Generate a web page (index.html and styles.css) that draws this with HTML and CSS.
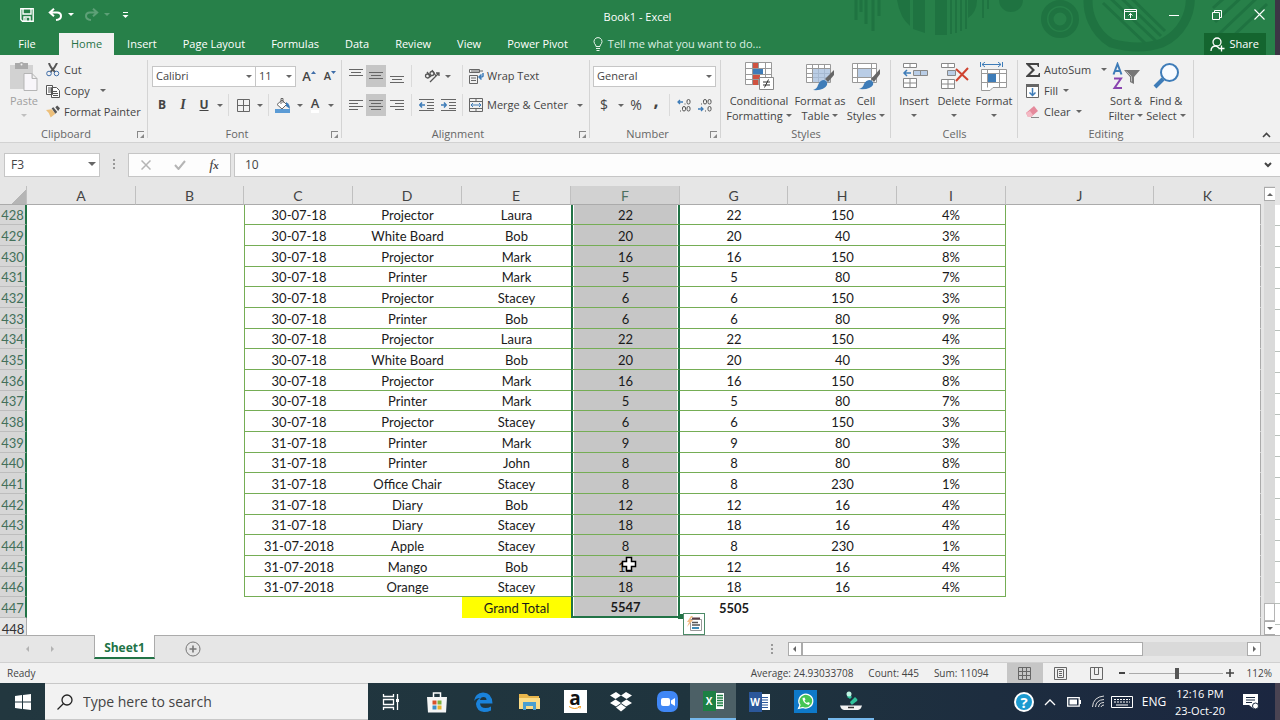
FILE: index.html
```html
<!DOCTYPE html>
<html lang="en">
<head>
<meta charset="utf-8">
<title>Book1 - Excel</title>
<link rel="stylesheet" href="styles.css">
</head>
<body>
<header class="titlebar">
  <svg class="pattern" width="422" height="55" viewBox="0 0 422 55" fill="none" stroke="#1f7341" aria-hidden="true">
    <path d="M3 0v20M8 0v12M13 0v24M20 0v31M26 0v16" stroke-width="3"/>
    <path d="M44 0q3 18 13 26V0M60 0v29l12 4V0" fill="#1f7341" stroke="none"/>
    <path d="M82 0v35h12V0zM124 0q0 12-9 18V0" fill="#1f7341" stroke="none"/>
    <path d="M98 0v34M103 0v33M108 0v31M113 0v29M130 0v18M135 0v9" stroke-width="2"/>
    <circle cx="158" cy="0" r="12" fill="#1f7341" stroke="none"/>
    <circle cx="207" cy="19" r="16" stroke-width="6"/><circle cx="207" cy="19" r="9" stroke-width="5"/>
    <path d="M236-8a49 49 0 0 0 22 51q28 8 51 0a49 49 0 0 0 28-50" stroke-width="9"/>
    <path d="M250 3l42 40M256-3l48 45M264-6l44 42M274-6l38 37" stroke-width="3"/>
    <path d="M360 8l18-16M362 22l30-28M366 34l40-38M378 38l36-34" stroke-width="3"/>
  </svg>
  <div class="titlerow">
    <div class="quick">
      <button aria-label="Save"><svg width="14" height="14" viewBox="0 0 14 14" fill="none" stroke="#fff" stroke-width="1.4"><path d="M.8.8h12.4v12.4H2.5L.8 11.5zM3 1v5h8V1M4 13V9h6v4M6 10v3"/></svg></button>
      <button aria-label="Undo" class="undo"><svg width="15" height="13" viewBox="0 0 15 13" fill="none" stroke="#fff" stroke-width="2"><path d="M6 .8L1.800 4.500 6 8.200M2 4.500h7q4 0 4 3.500T8 12"/></svg><i class="caret light"></i></button>
      <button aria-label="Redo" class="redo"><svg width="15" height="13" viewBox="0 0 15 13" fill="none" stroke="#fff" stroke-width="2"><path d="M9 .8l4.200 3.700L9 8.200M13 4.500H6q-4 0-4 3.500t5 4"/></svg><i class="caret light"></i></button>
      <button aria-label="Customize Quick Access Toolbar" class="more"><svg width="7" height="8" viewBox="0 0 7 8"><path d="M1 1.500h5" stroke="#fff"/><path d="M.5 4h6l-3 3z" fill="#fff"/></svg></button>
    </div>
    <h1>Book1 - Excel</h1>
    <div class="window">
      <button aria-label="Ribbon Display Options"><svg width="13" height="11" viewBox="0 0 13 11" fill="none" stroke="#fff"><path d="M.5.5h12v10H.5zM.5 2.500h12M6.500 9V4.500M4.500 6.500l2-2 2 2"/></svg></button>
      <button aria-label="Minimize"><svg width="10" height="10" viewBox="0 0 10 10"><path d="M0 5.500h10" stroke="#fff"/></svg></button>
      <button aria-label="Restore"><svg width="10" height="10" viewBox="0 0 10 10" fill="none" stroke="#fff"><path d="M.5 2.500h7v7h-7zM2.500 2.500v-2h7v7h-2"/></svg></button>
      <button aria-label="Close"><svg width="11" height="11" viewBox="0 0 11 11"><path d="M.5.5l10 10M10.500.5l-10 10" stroke="#fff" stroke-width="1.100"/></svg></button>
    </div>
  </div>
  <nav class="tabs">
    <button class="file">File</button><button class="active">Home</button><button>Insert</button><button>Page Layout</button><button>Formulas</button><button>Data</button><button>Review</button><button>View</button><button>Power Pivot</button>
    <button class="tell"><svg width="10" height="14" viewBox="0 0 10 14" fill="none" stroke="#e6f2ea"><path d="M3 9.500Q3 8 1.500 6.500a4 4 0 1 1 7 0Q7 8 7 9.500zM3 11.500h4M3.500 13.500h3"/></svg>Tell me what you want to do...</button>
    <button class="share"><svg width="15" height="15" viewBox="0 0 15 15" fill="none" stroke="#fff" stroke-width="1.300"><circle cx="7" cy="5" r="4"/><path d="M1 14q0-5 5-5l3 2M11.500 8.500v6M8.500 11.500h6"/></svg>Share</button>
  </nav>
</header>

<section class="ribbon" aria-label="Home ribbon">
  <div class="group g-clip">
    <div class="tools">
      <button class="big paste"><svg width="28" height="29" viewBox="0 0 28 29"><path d="M0 3h23v24H0z" fill="#d2d2d2"/><path d="M5 1h13v6H5z" fill="#aaa"/><circle cx="11.500" cy="2.500" r="2.500" fill="#aaa"/><circle cx="11.500" cy="2.500" r="1" fill="#f1f1f1"/><path d="M14 11.500h8l5 5v12H14zM22 11.500v5h5" fill="#f8f6fa" stroke="#b5b5b5"/></svg><span>Paste</span><i class="caret"></i></button>
      <div class="stack">
        <button><svg width="14" height="14" viewBox="0 0 14 14" fill="none"><path d="M3 0q1 4 6 9M11 0Q9 5 4.500 9" stroke="#555" stroke-width="2"/><circle cx="3" cy="10.500" r="2.300" stroke="#3e6da8"/><circle cx="10.500" cy="10.500" r="2.300" stroke="#3e6da8"/></svg>Cut</button>
        <button><svg width="14" height="14" viewBox="0 0 14 14" fill="#fff" stroke="#555"><path d="M.5 1.500h6v9h-6zM2 4h3M2 6h3M2 8h3M5.500 3.500h5l3 3v7h-8zM7 7.500h4M7 9.500h5M7 11.500h5"/></svg>Copy<i class="caret far"></i></button>
        <button><svg width="14" height="13" viewBox="0 0 15 13"><path d="M0 5l6-1 4 5-5 4q-1-5-5-8z" fill="#edc07b"/><path d="M6 3l2-1 4 5-2 2zM10 2l2-2 3 3-2 3z" fill="#555"/></svg>Format Painter</button>
      </div>
    </div>
    <footer>Clipboard<button class="launch" aria-label="Clipboard settings"></button></footer>
  </div>

  <div class="group g-font">
    <div class="tools rows">
      <div class="row">
        <label class="combo name"><select aria-label="Font"><option>Calibri</option></select><i class="caret"></i></label><label class="combo size"><select aria-label="Font size"><option>11</option></select><i class="caret"></i></label>
        <button class="w22" aria-label="Increase font size"><b class="ga">A</b><svg width="5" height="12" viewBox="0 0 5 12"><path d="M0 4l2.500-3L5 4z" fill="#3e6da8"/></svg></button>
        <button class="w20" aria-label="Decrease font size"><b class="ga sm">A</b><svg width="5" height="12" viewBox="0 0 5 12"><path d="M0 1h5L2.500 4z" fill="#3e6da8"/></svg></button>
      </div>
      <div class="row">
        <button class="w20 glyph"><b>B</b></button><button class="w22 glyph"><i class="it">I</i></button><button class="w20 glyph"><u>U</u></button><button class="dd" aria-label="Underline options"><i class="caret"></i></button>
        <span class="vr"></span>
        <button class="w22" aria-label="Borders"><svg width="13" height="13" viewBox="0 0 13 13" fill="none" stroke="#666"><path d="M.5.5h12v12H.5zM6.500 0v13M0 6.500h13"/></svg></button><button class="dd" aria-label="Border options"><i class="caret"></i></button>
        <span class="vr"></span>
        <button class="w22" aria-label="Fill color"><svg width="16" height="15" viewBox="0 0 16 15"><path d="M2 6.500L7 2l4.500 4.500L7 11zM6 6V.5h2V5" fill="#fff" stroke="#666"/><path d="M11 4q4 2 4 7l-4-3z" fill="#3e7cb8"/><path d="M0 11h15v4H0z" fill="#5b9bd5"/></svg></button><button class="dd" aria-label="Fill options"><i class="caret"></i></button><button class="w20 fc" aria-label="Font color"><span>A</span></button><button class="dd" aria-label="Font color options"><i class="caret"></i></button>
      </div>
    </div>
    <footer>Font<button class="launch" aria-label="Font settings"></button></footer>
  </div>

  <div class="group g-align">
    <div class="tools rows">
      <div class="row">
        <button class="w20" aria-label="Top align"><svg width="14" height="16" viewBox="0 0 14 16" stroke="#666"><path d="M0 1.500h14M2 4.500h10M0 7.500h14"/></svg></button><button class="w20 on" aria-label="Middle align"><svg width="14" height="16" viewBox="0 0 14 16" stroke="#666"><path d="M0 4.500h14M2 7.500h10M0 10.500h14"/></svg></button><button class="w22" aria-label="Bottom align"><svg width="14" height="16" viewBox="0 0 14 16" stroke="#666"><path d="M0 8.500h14M2 11.500h10M0 14.500h14"/></svg></button>
        <span class="vr"></span>
        <button class="orient" aria-label="Orientation"><svg width="16" height="16" viewBox="0 0 16 16" fill="none" stroke="#555" stroke-width="1.300"><circle cx="3.500" cy="8" r="2"/><path d="M3 4l4 5M8 2l4 6"/><circle cx="8" cy="5.500" r="2"/><path d="M6 14l9-9M15 8V5h-3"/></svg><i class="caret"></i></button>
        <span class="vr"></span>
        <button class="text"><svg width="15" height="15" viewBox="0 0 15 15" fill="none" stroke="#666"><path d="M.5.500h10v3h-10zM2 2h12M.5 6.500h8v8h-8zM2 9h5M2 11.500h5"/><path d="M14 4v3q0 1-3 1M12.500 5.500l-2.500 2.500 2.500 2.500" stroke="#3e7cb8" stroke-width="1.500"/></svg>Wrap Text</button>
      </div>
      <div class="row">
        <button class="w20" aria-label="Align left"><svg width="14" height="12" viewBox="0 0 14 12" stroke="#666"><path d="M0 1.500h14M0 4.500h9M0 7.500h14M0 10.500h9"/></svg></button><button class="w20 on" aria-label="Center"><svg width="14" height="12" viewBox="0 0 14 12" stroke="#666"><path d="M0 1.500h14M2 4.500h10M0 7.500h14M2 10.500h10"/></svg></button><button class="w22" aria-label="Align right"><svg width="14" height="12" viewBox="0 0 14 12" stroke="#666"><path d="M0 1.500h14M5 4.500h9M0 7.500h14M5 10.500h9"/></svg></button>
        <span class="vr"></span>
        <button class="w22" aria-label="Decrease indent"><svg width="15" height="12" viewBox="0 0 15 12" stroke="#666"><path d="M0 .5h15M8 3.500h7M8 6.500h7M8 9.500h7M0 11.500h15"/><path d="M6 6H1M3 3.500L.8 6 3 8.500" stroke="#3e7cb8" stroke-width="1.500" fill="none"/></svg></button><button class="w22" aria-label="Increase indent"><svg width="15" height="12" viewBox="0 0 15 12" stroke="#666"><path d="M0 .5h15M8 3.500h7M8 6.500h7M8 9.500h7M0 11.500h15"/><path d="M0 6h5M3 3.500L5.200 6 3 8.500" stroke="#3e7cb8" stroke-width="1.500" fill="none"/></svg></button>
        <span class="vr"></span>
        <button class="text"><svg width="15" height="14" viewBox="0 0 15 14" fill="none" stroke="#666"><path d="M.5.5h13v13H.5zM.5 3.500h13M.5 10.500h13M7 .5v3M7 10.500v3"/><path d="M2 7h10M4 5L2 7l2 2M10 5l2 2-2 2" stroke="#3e7cb8"/></svg>Merge &amp; Center<i class="caret mid"></i></button>
      </div>
    </div>
    <footer>Alignment<button class="launch" aria-label="Alignment settings"></button></footer>
  </div>

  <div class="group g-num">
    <div class="tools rows">
      <div class="row"><label class="combo format"><select aria-label="Number format"><option>General</option></select><i class="caret"></i></label></div>
      <div class="row">
        <button class="w22 money">$</button><button class="dd" aria-label="Accounting options"><i class="caret"></i></button><button class="w20 money">%</button><button class="w20 comma">,</button>
        <span class="vr"></span>
        <button class="w22" aria-label="Increase decimal"><svg width="14" height="13" viewBox="0 0 14 13"><path d="M6 3H1M3 1L1 3l2 2" stroke="#3e7cb8" fill="none" stroke-width="1.300"/><g fill="none" stroke="#555"><rect x="10" y=".5" width="3" height="4.500" rx="1.500"/><rect x="5.500" y="7.500" width="3" height="4.500" rx="1.500"/><rect x="10" y="7.500" width="3" height="4.500" rx="1.500"/><path d="M8 4.500v1M3.500 11.500v1"/></g></svg></button><button class="w20" aria-label="Decrease decimal"><svg width="14" height="13" viewBox="0 0 14 13"><path d="M0 10h5M3 8l2 2-2 2" stroke="#3e7cb8" fill="none" stroke-width="1.300"/><g fill="none" stroke="#555"><rect x="5.500" y=".5" width="3" height="4.500" rx="1.500"/><rect x="10" y=".5" width="3" height="4.500" rx="1.500"/><rect x="10" y="7.500" width="3" height="4.500" rx="1.500"/><path d="M3.500 4.500v1M7.500 11.500v1"/></g></svg></button>
      </div>
    </div>
    <footer>Number<button class="launch" aria-label="Number settings"></button></footer>
  </div>

  <div class="group g-styles">
    <div class="tools">
      <button class="big cond"><svg width="29" height="29" viewBox="0 0 29 29"><path d="M.5.5h26v22H.5zM7.500.5v22M13.500.5v22M20.500.5v22M.5 6.500h26M.5 12.500h26M.5 17.500h26" fill="#fff" stroke="#999"/><path d="M8 1h5v5H8zM8 13h7v4H8zM8 18h5v5H8z" fill="#cf5240"/><path d="M8 7h10v5H8z" fill="#3e7cb8"/><path d="M14.500 15.500h14v12h-14z" fill="#fff" stroke="#888"/><path d="M18 20h7M18 23h7M23.500 17.500l-4 8" stroke="#333"/></svg><span>Conditional<br>Formatting<i class="caret"></i></span></button>
      <button class="big tbl"><svg width="29" height="29" viewBox="0 0 29 29"><path d="M.5 2.500h24v18H.5zM6.500 2.500v18M12.500 2.500v18M18.500 2.500v18M.5 6.500h24M.5 11.500h24M.5 15.500h24" fill="#fff" stroke="#999"/><path d="M7 7h17v13H7z" fill="#a9c1df" opacity=".8"/><path d="M28 8l-9 9 3 3 6-7z" fill="#666"/><path d="M18 18q4 1 3 5-3 6-14 5 4-1 5-5 2-5 6-5z" fill="#3e7cb8"/></svg><span>Format as<br>Table<i class="caret"></i></span></button>
      <button class="big sty"><svg width="29" height="29" viewBox="0 0 29 29"><path d="M.5 1.500h24v19H.5zM5.500 1.500v19M19.500 1.500v19M.5 6.500h24M.5 15.500h24" fill="#fff" stroke="#999"/><path d="M6 7h13v8H6z" fill="#b9cde6"/><path d="M28 7l-9 10 3 3 6-8z" fill="#666"/><path d="M18 18q4 1 3 5-3 5-14 4 4-1 5-5 2-4 6-4z" fill="#3e7cb8"/></svg><span>Cell<br>Styles<i class="caret"></i></span></button>
    </div>
    <footer>Styles</footer>
  </div>

  <div class="group g-cells">
    <div class="tools">
      <button class="big w40"><svg width="27" height="29" viewBox="0 0 27 29" fill="#fff" stroke="#888"><path d="M2.500 1.500h13v4h-13zM9 1.500v4M2.500 16.500h13v9h-13zM9 16.500v9M2.500 21h13"/><path d="M12.500 8.500h14v5h-14zM19.500 8.500v5" fill="#b9cde6"/><path d="M10 11H3M6 8l-3 3 3 3" fill="none" stroke="#3e7cb8" stroke-width="1.500"/></svg><span>Insert</span><i class="caret"></i></button>
      <button class="big w40"><svg width="29" height="29" viewBox="0 0 29 29" fill="#fff" stroke="#888"><path d="M1.500 1.500h13v4h-13zM8 1.500v4M1.500 17.500h13v9h-13zM8 17.500v9M1.500 22h13"/><path d="M7.500 8.500h8v5h-8z" fill="#b9cde6"/><path d="M16 7l12 11M28 6L16 19" stroke="#cf4330" stroke-width="2"/></svg><span>Delete</span><i class="caret"></i></button>
      <button class="big w40"><svg width="28" height="29" viewBox="0 0 28 29" fill="#fff" stroke="#999"><path d="M1.500 7.500h25v18H13l-3 3H1.500zM7.500 7.500v18M19.500 7.500v18M1.500 11.500h25M1.500 20.500h25"/><path d="M8 12h8v8H8z" fill="#3e7cb8" stroke="none"/><path d="M2 2.500h19M5 0L2 2.500 5 5M18 0l3 2.500L18 5M.5 0v5M22.500 0v5" fill="none" stroke="#3e7cb8"/></svg><span>Format</span><i class="caret"></i></button>
    </div>
    <footer>Cells</footer>
  </div>

  <div class="group g-edit">
    <div class="tools">
      <div class="stack">
        <button><svg width="14" height="14" viewBox="0 0 14 14"><path d="M0 0h13v4h-1l-1-2H4l5 5-5 5h8l1-2h1v4H0v-1l6-6-6-6z" fill="#444"/></svg>AutoSum<i class="caret far"></i></button>
        <button><svg width="14" height="14" viewBox="0 0 14 14" fill="#fff" stroke="#666"><path d="M.5.500h12v13H.5z"/><path d="M0 1.500h13" stroke-width="3"/><path d="M6.500 4v7M3.500 8.500l3 3 3-3" stroke="#3e7cb8" stroke-width="1.500" fill="none"/></svg>Fill<i class="caret near"></i></button>
        <button><svg width="14" height="14" viewBox="0 0 14 14"><path d="M0 8l8-7 4 5-7 6H2z" fill="#e58a9c"/><path d="M2 12l-2-4 4-2 3 4-2 2z" fill="#f4b9c4"/><path d="M5 12.500h8" stroke="#888"/></svg>Clear<i class="caret near"></i></button>
      </div>
      <button class="big w40 sort"><svg width="28" height="29" viewBox="0 0 28 29"><path d="M1.500 12.500L5.500 2l4 10.500M3 9h5.500" stroke="#3e7cb8" stroke-width="2" fill="none"/><path d="M2 16.500h7L2.500 26H10" stroke="#8a44b0" stroke-width="2" fill="none"/><path d="M12 8h16l-6 7v7l-4-2v-5z" fill="#777"/><path d="M14.500 9.500l5 5v5" stroke="#bbb" fill="none"/></svg><span>Sort &amp;<br>Filter<i class="caret"></i></span></button>
      <button class="big w40"><svg width="27" height="29" viewBox="0 0 27 29" fill="none" stroke="#3e7cb8"><circle cx="16.500" cy="10.500" r="8.500" fill="#f8fbff" stroke-width="2"/><path d="M10 17l-8 8" stroke-width="4"/></svg><span>Find &amp;<br>Select<i class="caret"></i></span></button>
    </div>
    <footer>Editing</footer>
  </div>
  <button class="collapse" aria-label="Collapse the ribbon"><svg width="9" height="6" viewBox="0 0 9 6"><path d="M1 5l3.500-3.500L8 5" stroke="#444" fill="none" stroke-width="1.600"/></svg></button>
</section>

<div class="formula">
  <label class="combo cellref"><input value="F3" aria-label="Name box"><i class="caret wide"></i></label>
  <i class="dots"></i>
  <div class="fx">
    <button aria-label="Cancel"><svg width="10" height="10" viewBox="0 0 10 10"><path d="M.5.5l9 9M9.500.5l-9 9" stroke="#b5b5b5" stroke-width="1.500"/></svg></button>
    <button aria-label="Enter"><svg width="12" height="10" viewBox="0 0 12 10"><path d="M1 5l3.500 4L11 1" stroke="#b5b5b5" stroke-width="2" fill="none"/></svg></button>
    <button aria-label="Insert function"><em>f</em><sub>x</sub></button>
  </div>
  <div class="entry"><input value="10" aria-label="Formula bar"><svg width="8" height="6" viewBox="0 0 8 6"><path d="M1 1l3 3 3-3" stroke="#444" fill="none" stroke-width="2"/></svg></div>
</div>

<main class="sheet">
  <div class="grid">
    <table>
      <colgroup><col class="cn"><col class="c9"><col class="c8"><col class="c9"><col class="c9"><col class="c9"><col class="c9"><col class="c8"><col class="c9"><col class="c9"><col class="cj"><col></colgroup>
      <thead><tr><th class="corner"></th><th>A</th><th>B</th><th>C</th><th>D</th><th>E</th><th class="sel">F</th><th>G</th><th>H</th><th>I</th><th>J</th><th>K</th></tr></thead>
      <tbody>
        <tr class="d"><th>428</th><td></td><td></td><td>30-07-18</td><td>Projector</td><td>Laura</td><td>22</td><td>22</td><td>150</td><td>4%</td><td></td><td></td></tr>
        <tr class="d"><th>429</th><td></td><td></td><td>30-07-18</td><td>White Board</td><td>Bob</td><td>20</td><td>20</td><td>40</td><td>3%</td><td></td><td></td></tr>
        <tr class="d"><th>430</th><td></td><td></td><td>30-07-18</td><td>Projector</td><td>Mark</td><td>16</td><td>16</td><td>150</td><td>8%</td><td></td><td></td></tr>
        <tr class="d"><th>431</th><td></td><td></td><td>30-07-18</td><td>Printer</td><td>Mark</td><td>5</td><td>5</td><td>80</td><td>7%</td><td></td><td></td></tr>
        <tr class="d"><th>432</th><td></td><td></td><td>30-07-18</td><td>Projector</td><td>Stacey</td><td>6</td><td>6</td><td>150</td><td>3%</td><td></td><td></td></tr>
        <tr class="d"><th>433</th><td></td><td></td><td>30-07-18</td><td>Printer</td><td>Bob</td><td>6</td><td>6</td><td>80</td><td>9%</td><td></td><td></td></tr>
        <tr class="d"><th>434</th><td></td><td></td><td>30-07-18</td><td>Projector</td><td>Laura</td><td>22</td><td>22</td><td>150</td><td>4%</td><td></td><td></td></tr>
        <tr class="d"><th>435</th><td></td><td></td><td>30-07-18</td><td>White Board</td><td>Bob</td><td>20</td><td>20</td><td>40</td><td>3%</td><td></td><td></td></tr>
        <tr class="d"><th>436</th><td></td><td></td><td>30-07-18</td><td>Projector</td><td>Mark</td><td>16</td><td>16</td><td>150</td><td>8%</td><td></td><td></td></tr>
        <tr class="d"><th>437</th><td></td><td></td><td>30-07-18</td><td>Printer</td><td>Mark</td><td>5</td><td>5</td><td>80</td><td>7%</td><td></td><td></td></tr>
        <tr class="d"><th>438</th><td></td><td></td><td>30-07-18</td><td>Projector</td><td>Stacey</td><td>6</td><td>6</td><td>150</td><td>3%</td><td></td><td></td></tr>
        <tr class="d"><th>439</th><td></td><td></td><td>31-07-18</td><td>Printer</td><td>Mark</td><td>9</td><td>9</td><td>80</td><td>3%</td><td></td><td></td></tr>
        <tr class="d"><th>440</th><td></td><td></td><td>31-07-18</td><td>Printer</td><td>John</td><td>8</td><td>8</td><td>80</td><td>8%</td><td></td><td></td></tr>
        <tr class="d"><th>441</th><td></td><td></td><td>31-07-18</td><td>Office Chair</td><td>Stacey</td><td>8</td><td>8</td><td>230</td><td>1%</td><td></td><td></td></tr>
        <tr class="d"><th>442</th><td></td><td></td><td>31-07-18</td><td>Diary</td><td>Bob</td><td>12</td><td>12</td><td>16</td><td>4%</td><td></td><td></td></tr>
        <tr class="d"><th>443</th><td></td><td></td><td>31-07-18</td><td>Diary</td><td>Stacey</td><td>18</td><td>18</td><td>16</td><td>4%</td><td></td><td></td></tr>
        <tr class="d"><th>444</th><td></td><td></td><td>31-07-2018</td><td>Apple</td><td>Stacey</td><td>8</td><td>8</td><td>230</td><td>1%</td><td></td><td></td></tr>
        <tr class="d"><th>445</th><td></td><td></td><td>31-07-2018</td><td>Mango</td><td>Bob</td><td>12<svg class="cursor" width="16" height="16" viewBox="0 0 16 16"><path d="M5.500 1.500h5v4h4v5h-4v4h-5v-4h-4v-5h4z" fill="#fff" stroke="#000" stroke-width="1.500"/></svg></td><td>12</td><td>16</td><td>4%</td><td></td><td></td></tr>
        <tr class="d"><th>446</th><td></td><td></td><td>31-07-2018</td><td>Orange</td><td>Stacey</td><td>18</td><td>18</td><td>16</td><td>4%</td><td></td><td></td></tr>
        <tr class="total"><th>447</th><td></td><td></td><td></td><td></td><td class="label">Grand Total</td><td>5547<button class="analysis" aria-label="Quick Analysis"><svg width="16" height="16" viewBox="0 0 16 16"><path d="M4.500 3.500h11v11h-11z" fill="#fff" stroke="#999"/><path d="M6 2.500h8" stroke="#5c3d45" stroke-width="2"/><path d="M6 6.500h6M6 9h8" stroke="#555" stroke-width="1.500"/><path d="M6 12h7" stroke="#3e8cb8" stroke-width="2"/><path d="M5 0L1 6h2L1 11l6-7H4l3-4z" fill="#f3bd86"/></svg></button></td><td>5505</td><td></td><td></td><td></td><td></td></tr>
        <tr class="plain"><th>448</th><td></td><td></td><td></td><td></td><td></td><td></td><td></td><td></td><td></td><td></td><td></td></tr>
      </tbody>
    </table>
  </div>
  <div class="vscroll"><button class="arrow" aria-label="Scroll up"><i class="tri up"></i></button><span class="track"></span><span class="thumb"></span><button class="arrow" aria-label="Scroll down"><i class="tri down"></i></button></div>
  <div class="edge"></div>
</main>

<div class="sheetbar">
  <button class="nav" aria-label="Previous sheet"><i class="tri left"></i></button><button class="nav" aria-label="Next sheet"><i class="tri right"></i></button>
  <button class="sheettab">Sheet1</button>
  <button class="add" aria-label="New sheet"><svg width="16" height="16" viewBox="0 0 16 16" fill="none" stroke="#777"><circle cx="8" cy="8" r="7"/><path d="M8 4.500v7M4.500 8h7" stroke-width="1.600"/></svg></button>
  <i class="dots"></i>
  <div class="hscroll"><button class="arrow" aria-label="Scroll left"><i class="tri left"></i></button><span class="thumb"></span><span class="track"></span><button class="arrow" aria-label="Scroll right"><i class="tri right"></i></button></div>
</div>

<div class="status">
  <span class="ready">Ready</span>
  <span>Average: 24.93033708</span><span>Count: 445</span><span>Sum: 11094</span>
  <div class="views">
    <button class="on" aria-label="Normal view"><svg width="13" height="13" viewBox="0 0 13 13" fill="none" stroke="#666"><path d="M.5.5h12v12H.5zM4.500 0v13M8.500 0v13M0 4.500h13M0 8.500h13"/></svg></button>
    <button aria-label="Page layout view"><svg width="13" height="13" viewBox="0 0 13 13" fill="none" stroke="#666"><path d="M.5.5h12v12H.5zM3.500 2.500h6v8h-6zM5 4.500h3M5 6.500h3M5 8.500h3"/></svg></button>
    <button aria-label="Page break view"><svg width="13" height="13" viewBox="0 0 13 13" fill="none" stroke="#666"><path d="M.5.5h12v12H.5zM4.500.5v7h4v-7"/></svg></button>
  </div>
  <button class="zoom" aria-label="Zoom out"><svg width="6" height="8"><path d="M0 4h6" stroke="#444" stroke-width="2"/></svg></button>
  <input type="range" min="0" max="100" value="52" aria-label="Zoom">
  <button class="zoom" aria-label="Zoom in"><svg width="8" height="8"><path d="M0 4h8M4 0v8" stroke="#444" stroke-width="1.600"/></svg></button>
  <span class="pct">112%</span>
</div>

<footer class="taskbar">
  <button class="start" aria-label="Start"><svg width="16" height="16" viewBox="0 0 16 16" fill="#fff"><path d="M0 2l7-1v6.500H0zM8 .9L16 0v7.500H8zM0 8.500h7V15l-7-1zM8 8.500h8V16l-8-1z"/></svg></button>
  <label class="search"><svg width="16" height="16" viewBox="0 0 16 16" fill="none" stroke="#222" stroke-width="1.300"><circle cx="10" cy="6" r="5"/><path d="M6.500 9.500L.5 15.500"/></svg><input placeholder="Type here to search" aria-label="Search"></label>
  <button aria-label="Task View"><svg width="18" height="16" viewBox="0 0 18 16" fill="none" stroke="#fff"><path d="M1.500 0v2.500h10V0M1.500 5.500h10v5h-10zM1.500 16v-2.500h10V16M15.500 0v16" stroke-width="1.300"/><path d="M14 5h3v3h-3z" fill="#fff" stroke="none"/></svg></button>
  <button aria-label="Store"><svg width="22" height="22" viewBox="0 0 22 22"><path d="M7.500 6V2h7v4" stroke="#fff" fill="none" stroke-width="1.500"/><path d="M1 6h20l-1 15.500H2z" fill="#f5f5f5"/><path d="M6.500 9.500h4v4h-4z" fill="#d9512c"/><path d="M11.500 9.500h4v4h-4z" fill="#7eb13d"/><path d="M6.500 14.500h4v4h-4z" fill="#3d8fc9"/><path d="M11.500 14.500h4v4h-4z" fill="#e8b22d"/></svg></button>
  <button aria-label="Edge"><svg width="20" height="20" viewBox="0 0 20 20"><path d="M1 9Q2 1 10 0.500q9 0 9.500 11H7q.5 4.500 5.500 4.500 3 0 5.500-1.500v4Q15 20 11 20 3.500 19 3 12q.5-4 4-6Q3 6 1 9zm6-1h6.500q0-3-3-3T7 8z" fill="#1a82da" fill-rule="evenodd"/></svg></button>
  <button aria-label="File Explorer"><svg width="21" height="18" viewBox="0 0 21 18"><path d="M0 1h8l2 2h10v13H0z" fill="#e8b64c"/><path d="M0 5h21v11H0z" fill="#fbdc86"/><path d="M4 9h13v8h-3v-4H7v4H4z" fill="#4a9fcf"/></svg></button>
  <button aria-label="Amazon"><span class="amz">a<svg width="12" height="4" viewBox="0 0 12 4"><path d="M0 .5q6 4 11 0M9 0h2.500l-.5 2.500" stroke="#f29a1f" fill="none"/></svg></span></button>
  <button aria-label="Dropbox"><svg width="22" height="20" viewBox="0 0 22 20" fill="#fff"><path d="M6 0l5 3.500L5.500 7 0 3.500zM16 0l6 3.500L16.500 7 11 3.500zM5.500 7.500L11 11l-5 3.500L0 11zM16.500 7.500L22 11l-6 3.500L11 11zM11 12l5 3.500-5 4-5-4z"/></svg></button>
  <button aria-label="Zoom"><svg width="21" height="21" viewBox="0 0 21 21"><rect width="21" height="21" rx="7" fill="#4087f5"/><rect x="4" y="7" width="9" height="8" rx="2" fill="#fff"/><path d="M14 9.500l4-2.500v8l-4-2.500z" fill="#fff"/></svg></button>
  <button class="current" aria-label="Excel"><span class="office xl">X</span><svg width="8" height="16" viewBox="0 0 8 16"><path d="M0 0h8v16H0z" fill="#fff"/><path d="M1 2.500h6M1 5h6M1 7.500h6M1 10h6M1 12.500h6" stroke="#1d8044" stroke-width="1.500"/></svg></button>
  <button aria-label="Word"><span class="office wd">W</span><svg width="8" height="16" viewBox="0 0 8 16"><path d="M0 0h8v16H0z" fill="#fff"/><path d="M0 3.500h6M0 6h6M0 8.500h6M0 11h6M0 13.500h6" stroke="#2b579a"/></svg></button>
  <button aria-label="WhatsApp"><svg width="23" height="23" viewBox="0 0 23 23"><path d="M0 0h23v23H0z" fill="#0e79c9"/><path d="M4.500 18.500L6 15a7 7 0 1 1 3 2.500z" fill="#45c556" stroke="#fff" stroke-width="1.200"/><path d="M8.500 8q0 5 6 7l1.500-2-2-1-1 1q-2-1-2.500-2.500l1-1-1-2z" fill="#fff"/></svg></button>
  <button class="open" aria-label="Recorder"><svg width="22" height="20" viewBox="0 0 22 20"><path d="M10 11l5-5 2 2q1 1 0 2l-4 3q-1 1-2 0z" fill="#2fc39b"/><path d="M9 3l3 3-2 2-3-2z" fill="#2fc39b"/><circle cx="9" cy="3" r="2.500" fill="#bff5e4"/><path d="M0 14.500h22q-1 4-4 4.500H4q-3-.5-4-4.500z" fill="#f2f2f2"/><path d="M8 16.500h6" stroke="#333" stroke-width="1.500"/></svg></button>
  <div class="tray">
    <button class="help" aria-label="Help">?</button>
    <button aria-label="Hidden icons"><svg width="12" height="8" viewBox="0 0 12 8"><path d="M1 7l5-5 5 5" stroke="#fff" fill="none" stroke-width="1.300"/></svg></button>
    <button aria-label="Battery"><svg width="14" height="10" viewBox="0 0 14 10"><path d="M.7.700h11.500v8.500H.7z" fill="none" stroke="#fff" stroke-width="1.300"/><path d="M2.500 2.500H10v5H2.500zM12 3h2v4h-2z" fill="#fff"/></svg></button>
    <button aria-label="Network"><svg width="13" height="13" viewBox="0 0 13 13" fill="none" stroke="#ddd"><path d="M.5 12Q1 2 12 1M3.500 12Q4 5 12 4.500M6.500 12q.5-4.500 5.500-4.500M9 12q.5-2 3-2"/></svg></button>
    <button aria-label="Keyboard"><svg width="22" height="12" viewBox="0 0 22 12" fill="none" stroke="#fff"><path d="M.5.500h21v11H.5z"/><path d="M3 3.500h16M3 6h16" stroke-dasharray="2 1"/><path d="M5 9h12"/></svg></button>
    <button class="lang">ENG</button>
    <button class="clock">12:16 PM<br>23-Oct-20</button>
    <button class="note" aria-label="Notifications"><svg width="16" height="16" viewBox="0 0 16 16"><path d="M0 0h15v11h-4v4l-5-4H0z" fill="#fff"/><path d="M3 3.500h9M3 6h9M3 8.500h6" stroke="#1b2a40"/><circle cx="12.500" cy="12" r="3" fill="#fff" stroke="#1b2a40"/></svg></button>
  </div>
  <div class="edge"></div>
</footer>
</body>
</html>
```
FILE: styles.css
```css
* { box-sizing: border-box; }
body {
  margin: 0;
  min-height: 100vh;
  display: flex;
  flex-direction: column;
  background: #e6e6e6;
  color: #444;
  font: 11px/14px "Open Sans", "Noto Sans", sans-serif;
  overflow: hidden;
}
button, input, select { font: inherit; color: inherit; background: none; border: 0; padding: 0; margin: 0; }
button { display: flex; align-items: center; justify-content: center; white-space: nowrap; flex: none; }
svg { display: block; flex: none; }
input:focus { outline: none; }

.caret { display: inline-block; flex: none; border: 3px solid transparent; border-top-color: #666; border-bottom-width: 0; }
.caret.light { border-top-color: #fff; }
.caret.wide { border-width: 4px 4px 0; }

/* title bar and tabs */
.titlebar { position: relative; background: #278049; color: #fff; height: 55px; display: flex; flex-direction: column; border-right: 5px solid #3c3545; }
.pattern { position: absolute; right: 0; top: 0; }
.titlerow { position: relative; flex: 1; display: grid; grid-template-columns: 1fr auto 1fr; align-items: center; height: 33px; }
.titlerow h1 { margin: 0; font-size: 11px; font-weight: 400; }
.quick { display: flex; padding: 0 0 4px 20px; }
.undo, .redo { gap: 5px; margin-left: 14px; }
.redo { margin-left: 10px; opacity: .25; }
.more { margin-left: 12px; }
.window { display: flex; justify-content: flex-end; padding-bottom: 4px; padding-right: 5px; }
.window button { width: 43px; }
.window button:last-child { width: 22px; margin-left: 10px; }
.tabs { position: relative; display: flex; height: 22px; }
.tabs button { padding: 0 13px; height: 22px; }
.tabs .file { width: 59px; padding-right: 18px; }
.tabs .active { background: #f1f1f1; color: #277347; padding: 0 12px; }
.tabs .tell { gap: 5px; color: #dcefe3; padding-left: 12px; }
.tabs .share { margin-left: auto; margin-right: 9px; padding: 0 7px 0 6px; gap: 4px; background: #14652f; }

/* ribbon */
.ribbon { display: flex; background: #f1f1f1; border-bottom: 1px solid #d2d2d2; height: 88px; position: relative; }
.group { display: flex; flex-direction: column; position: relative; flex: none; }
.group::after { content: ""; position: absolute; right: 0; top: 5px; bottom: 4px; width: 1px; background: #d4d4d4; }
.g-clip { width: 148px; }
.g-font { width: 194px; }
.g-align { width: 248px; }
.g-num { width: 131px; }
.g-styles { width: 170px; }
.g-cells { width: 127px; }
.g-edit { width: 176px; }
.group footer { display: flex; justify-content: center; position: relative; height: 15px; color: #666; padding-right: 16px; }
.g-styles footer, .g-cells footer, .g-edit footer { padding-right: 0; }
.launch { position: absolute; right: 4px; top: 4px; width: 7px; height: 7px; border-top: 1px solid #888; border-left: 1px solid #888; }
.launch::after { content: ""; position: absolute; right: 0; bottom: 0; border: 2px solid #888; border-top-color: transparent; border-left-color: transparent; }
.tools { display: flex; flex: 1; padding-top: 4px; }
.rows { flex-direction: column; gap: 7px; padding: 10px 0 0 4px; }
.row { display: flex; height: 22px; align-items: center; }
.g-num .rows { padding-left: 3px; }
.stack { display: flex; flex-direction: column; padding-left: 2px; }
.stack button { height: 21px; gap: 4px; justify-content: flex-start; }
.caret.far { margin-left: 6px; }
.caret.near { margin-left: 1px; }
.caret.mid { margin-left: 6px; }
.g-edit .stack { width: 88px; padding-left: 8px; }
.big { flex-direction: column; justify-content: flex-start; padding-top: 3px; gap: 2px; }
.big span { line-height: 15px; text-align: center; }
.big span .caret { margin: 0 0 3px 3px; }
.big > .caret { margin-top: 4px; }
.paste { width: 44px; padding-left: 4px; color: #a0a0a0; }
.paste .caret { border-top-color: #c0c0c0; }
.cond { width: 76px; }
.tbl { width: 46px; }
.sty { width: 46px; }
.w40 { width: 40px; }
.g-cells .tools { padding-left: 3px; }
.w20 { width: 20px; height: 22px; }
.w22 { width: 22px; height: 22px; }
.dd { width: 11px; height: 22px; }
.on { background: #c6c6c6; }
.vr { width: 1px; height: 22px; margin: 0 3px; background: #dadada; flex: none; }
.ga { font-size: 13px; font-weight: 600; }
.ga.sm { font-size: 11px; }
.glyph { font-size: 12px; }
.glyph b, .glyph u { font-weight: 700; }
.it { font-family: "Liberation Serif", serif; font-size: 14px; font-weight: 700; }
.fc { font-size: 13px; font-weight: 600; }
.fc span { border-bottom: 3px solid #fff; line-height: 13px; }
.orient { gap: 5px; width: 44px; }
.text { gap: 3px; margin-left: 3px; }
.money { font-size: 14px; }
.comma { font-size: 18px; font-weight: 700; padding-bottom: 10px; }
.collapse { position: absolute; right: 9px; bottom: 4px; }

.combo { display: flex; align-items: center; position: relative; background: #fff; border: 1px solid #c6c6c6; height: 21px; flex: none; }
.combo select, .combo input { appearance: none; width: 100%; padding-left: 3px; }
.combo .caret { position: absolute; right: 3px; top: 8px; pointer-events: none; }
.combo.name { width: 104px; }
.combo.size { width: 41px; margin: 0 2px 0 -1px; }
.combo.format { width: 123px; }

/* formula bar */
.formula { display: flex; align-items: center; height: 43px; padding: 0 0 0 4px; font-size: 12px; }
.formula .combo { width: 96px; height: 24px; }
.formula .combo input { padding-left: 6px; }
.dots { width: 2px; height: 11px; margin: 0 13px; background: repeating-linear-gradient(#999 0 2px, transparent 2px 4px); flex: none; }
.fx { display: flex; width: 103px; height: 24px; background: #fdfdfd; border: 1px solid #c6c6c6; }
.fx button { width: 34px; font-family: "Liberation Serif", serif; font-size: 15px; }
.fx sub { font-size: 11px; font-style: italic; font-weight: 700; }
.entry { display: flex; flex: 1; align-items: center; height: 24px; margin-left: 3px; padding: 0 8px 0 10px; background: #fdfdfd; border: 1px solid #c6c6c6; border-right: 0; }
.entry input { flex: 1; }

/* worksheet */
.sheet { display: flex; flex: 1 1 0; min-height: 0; overflow: hidden; border-bottom: 1px solid #ababab; }
.grid { flex: 1; overflow: hidden; min-width: 0; }
table { width: 100%; min-width: 1100px; border-spacing: 0; table-layout: fixed; font: 13px/17px Lato, "Open Sans", sans-serif; color: #1a1a1a; }
.cn { width: 27px; } .c9 { width: 109px; } .c8 { width: 108px; } .cj { width: 148px; }
th, td { padding: 0; text-align: center; font-weight: 400; white-space: nowrap; }
thead th { height: 19px; padding-top: 1px; font-size: 14px; color: #444; border-bottom: 1px solid #ababab; border-right: 1px solid #c0c0c0; }
thead th:last-child { border-right: 0; }
thead .sel { background: #d2d2d2; color: #4d7060; }
.corner { background: linear-gradient(135deg, transparent 68%, #b5b5b5 68%); }
tbody tr { height: 21px; }
tbody tr:nth-child(3n+1) { height: 20px; }
tbody th, tbody td { padding-top: 2px; }
tbody th { background: #d6d6d6; color: #43705a; border-right: 2px solid #217346; border-bottom: 1px solid #bdbdbd; font-size: 13px; }
tbody td { background: #fff; border-bottom: 1px solid transparent; }
tbody td:last-child { border-right: 1px solid #ababab; }
.d td:nth-child(n+4):nth-child(-n+10) { border-bottom-color: #75ad55; }
.d td:nth-child(4) { border-left: 1px solid #75ad55; }
.d td:nth-child(10) { border-right: 1px solid #75ad55; }
tbody td:nth-child(7) { position: relative; background: #c6c6c6; border-left: 2px solid #217346; border-right: 2px solid #217346; box-shadow: inset 1px 0 #fff, inset -1px 0 #fff; }
.total td:nth-child(7) { font-weight: 700; border-bottom: 2px solid #217346; padding-top: 1px; }
.total td:nth-child(8) { font-weight: 700; }
.total .label { background: #ff0; }
tbody .plain td:nth-child(7) { background: #fff; border-color: transparent; box-shadow: none; }
tbody .plain th { background: #e6e6e6; color: #333; border-right: 1px solid #ababab; border-bottom: 0; }
.cursor { position: absolute; left: 48px; top: 0; }
.analysis { position: absolute; left: 110px; top: 16px; width: 22px; height: 22px; background: #fff; border: 1px solid #4d8a68; z-index: 1; }
.analysis::before { content: ""; position: absolute; left: -6px; top: 0; width: 5px; height: 5px; background: #217346; }
.vscroll { display: flex; flex-direction: column; width: 11px; margin-left: 3px; padding-top: 1px; background: #dadada; }
.vscroll .track { flex: 1; }
.vscroll .thumb { height: 18px; background: #fff; border: 1px solid #b5b5b5; }
.arrow { width: 14px; height: 14px; background: #fff; border: 1px solid #ababab; }
.vscroll .arrow { width: 11px; border-right: 0; }
.tri { width: 0; height: 0; border: 3px solid transparent; }
.tri.up { border-bottom-color: #666; border-top: 0; }
.tri.down { border-top-color: #666; border-bottom: 0; }
.tri.left { border-right-color: #666; border-left: 0; }
.tri.right { border-left-color: #666; border-right: 0; }
.edge { width: 5px; flex: none; }
.sheet .edge { margin-top: 19px; background: repeating-linear-gradient(#fff 0 20px, #b9c0bb 20px 21px); }

/* sheet tabs */
.sheetbar { display: flex; align-items: center; height: 26px; padding: 0 19px 0 15px; }
.nav { width: 25px; height: 22px; opacity: .4; }
.sheettab { align-self: flex-start; margin: -1px 0 0 29px; padding-top: 3px; width: 61px; height: 24px; background: #fff; border: solid #ababab; border-width: 0 1px 2px; border-bottom-color: #217346; color: #217346; font-size: 12px; font-weight: 700; }
.add { margin: 0 auto 0 30px; }
.sheetbar .dots { margin: 0 15px 0 0; }
.hscroll { display: flex; width: 38%; max-width: 477px; height: 14px; background: #dadada; }
.hscroll .thumb { flex: 344; background: #fff; border: 1px solid #ababab; }
.hscroll .track { flex: 105; }

/* status bar */
.status { display: flex; align-items: center; height: 21px; padding: 0 8px 0 7px; background: #f1f1f1; border-top: 1px solid #d0d0d0; font-size: 10px; white-space: nowrap; }
.status > span { margin-right: 15px; }
.status .ready { margin-right: auto; }
.views { display: flex; margin-left: 3px; height: 20px; }
.views button { width: 36px; }
.zoom { width: 14px; height: 20px; }
.status input { appearance: none; width: 94px; height: 20px; background: linear-gradient(#aaa, #aaa) center / 100% 1px no-repeat; }
.status input::-webkit-slider-thumb { appearance: none; width: 4px; height: 11px; background: #555; }
.status .pct { margin: 0 0 0 10px; }

/* taskbar */
.taskbar { display: flex; height: 37px; background: linear-gradient(90deg, #22373f, #1f343e 55%, #1b2640); color: #fff; }
.taskbar > button { width: 46px; height: 37px; }
.taskbar .start { width: 45px; }
.search { display: flex; align-items: center; width: 323px; padding-left: 12px; gap: 10px; background: #f2f2f2; border: solid #c8c8c8; border-width: 1px 0; font-size: 14px; color: #333; }
.search input { flex: 1; }
.search input::placeholder { color: #444; opacity: 1; }
.current { background: #4c6066; }
.taskbar .current, .taskbar .open { border-bottom: 2px solid #76b9ed; }
.amz { display: flex; flex-direction: column; align-items: center; width: 23px; height: 23px; background: #fff; color: #111; font-size: 19px; font-weight: 700; line-height: 16px; }
.office { width: 13px; height: 20px; line-height: 20px; font-size: 10px; font-weight: 700; }
.xl { background: #1d8044; }
.wd { background: #2b579a; }
.tray { display: flex; margin-left: auto; align-items: center; }
.tray button { width: 24px; height: 37px; }
.tray .help { width: 20px; height: 20px; margin-right: 4px; border: 2px solid #fff; border-radius: 50%; background: #1c9ad0; font-size: 15px; font-weight: 700; }
.tray .lang { width: 40px; font-size: 12px; }
.tray .clock { width: 52px; font-size: 11px; line-height: 17px; }
.tray .note { width: 49px; }
.taskbar .edge { background: #4a4352; }
```
